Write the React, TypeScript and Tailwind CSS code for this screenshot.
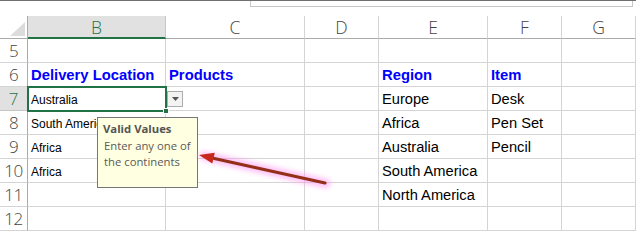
import React from "react";

const cellFont = { fontFamily: '"Liberation Sans", Arial, sans-serif' };
const headFont = { fontFamily: '"Open Sans", "Noto Sans", sans-serif' };

type Cell = { t?: string; k?: "h" | "s" | "n" };

const widths = ["w-[138px]", "w-[139px]", "w-[74px]", "w-[109px]", "w-[74px]", "flex-1"];
const letters = ["B", "C", "D", "E", "F", "G"];

const rows: { n: number; cells: Cell[] }[] = [
  { n: 5, cells: [{}, {}, {}, {}, {}, {}] },
  {
    n: 6,
    cells: [
      { t: "Delivery Location", k: "h" },
      { t: "Products", k: "h" },
      {},
      { t: "Region", k: "h" },
      { t: "Item", k: "h" },
      {},
    ],
  },
  { n: 7, cells: [{ t: "Australia", k: "s" }, {}, {}, { t: "Europe", k: "n" }, { t: "Desk", k: "n" }, {}] },
  { n: 8, cells: [{ t: "South America", k: "s" }, {}, {}, { t: "Africa", k: "n" }, { t: "Pen Set", k: "n" }, {}] },
  { n: 9, cells: [{ t: "Africa", k: "s" }, {}, {}, { t: "Australia", k: "n" }, { t: "Pencil", k: "n" }, {}] },
  { n: 10, cells: [{ t: "Africa", k: "s" }, {}, {}, { t: "South America", k: "n" }, {}, {}] },
  { n: 11, cells: [{}, {}, {}, { t: "North America", k: "n" }, {}, {}] },
  { n: 12, cells: [{}, {}, {}, {}, {}, {}] },
];

function CellText({ c }: { c: Cell }) {
  if (!c.t) return null;
  if (c.k === "h")
    return <span className="text-[14.8px] font-bold text-[#0000ff] whitespace-nowrap leading-none">{c.t}</span>;
  if (c.k === "s") return <span className="text-[12px] text-black whitespace-nowrap leading-none">{c.t}</span>;
  return <span className="text-[14.67px] text-black whitespace-nowrap leading-none">{c.t}</span>;
}

export default function App() {
  return (
    <div className="relative w-[636px] h-[232px] bg-white overflow-hidden select-none" style={cellFont}>
      {/* top strip */}
      <div className="flex h-[16px] border-t border-[#6f6f6f]">
        <div className="w-[250px]" />
        <div className="flex-1 h-[6px] border-l border-b border-r border-[#c6c6c6] mr-[3px]" />
      </div>

      {/* column header row */}
      <div className="flex h-[23px]">
        <div className="relative w-[28px] border-r border-b border-[#ababab] bg-white">
          <svg className="absolute left-0 top-0" width="28" height="23" viewBox="0 0 28 23">
            <polygon points="10,20 25,6 25,20" fill="#dcdcdc" />
          </svg>
        </div>
        {letters.map((l, i) =>
          l === "B" ? (
            <div
              key={l}
              className={`${widths[i]} flex items-center justify-center pt-[1px] bg-[#e1e1e1] border-r border-[#c6c6c6] border-b-2 border-b-[#217346] text-[#217346] text-[17.5px] font-light`}
              style={headFont}
            >
              {l}
            </div>
          ) : (
            <div
              key={l}
              className={`${widths[i]} flex items-center justify-center pt-[1px] bg-white border-r border-[#d4d4d4] border-b border-b-[#ababab] text-[#444444] text-[17.5px] font-light`}
              style={headFont}
            >
              {l}
            </div>
          )
        )}
      </div>

      {/* rows */}
      {rows.map((r) => (
        <div key={r.n} className="flex h-[24px]">
          {r.n === 7 ? (
            <div
              className="w-[28px] flex items-center justify-center bg-[#e1e1e1] border-r border-b border-r-[#ababab] border-b-[#c6c6c6] text-[#217346] text-[17px] font-light"
              style={headFont}
            >
              {r.n}
            </div>
          ) : (
            <div
              className="w-[28px] flex items-center justify-center bg-white border-r border-b border-r-[#ababab] border-b-[#d4d4d4] text-[#444444] text-[17px] font-light tracking-[-0.5px]"
              style={headFont}
            >
              {r.n}
            </div>
          )}
          {r.cells.map((c, i) => (
            <div
              key={i}
              className={`${widths[i]} flex items-center pl-[3px] pt-[2px] border-r border-b border-[#d4d4d4] overflow-visible`}
            >
              <CellText c={c} />
            </div>
          ))}
        </div>
      ))}

      {/* selection border on B7 */}
      <div className="absolute left-[27px] top-[86px] w-[140px] h-[26px] border-2 border-[#217346] pointer-events-none" />
      <div className="absolute left-[163px] top-[108px] w-[6px] h-[6px] bg-[#217346] border border-white" />

      {/* dropdown button */}
      <div className="absolute left-[167px] top-[91px] w-[16px] h-[16px] bg-[#f3f3f3] border border-[#acacac] flex items-center justify-center">
        <svg width="7" height="4" viewBox="0 0 7 4">
          <polygon points="0,0 7,0 3.5,4" fill="#555555" />
        </svg>
      </div>

      {/* input message tooltip */}
      <div
        className="absolute left-[97px] top-[117px] w-[101px] h-[71px] bg-[#ffffe1] border border-[#767676] pl-[5px] pt-[3px] text-[11.3px] leading-[16.5px] text-[#5a5a5a]"
        style={headFont}
      >
        <div className="font-bold text-[#555555]">Valid Values</div>
        <div className="pl-[1px]">Enter any one of</div>
        <div className="pl-[1px]">the continents</div>
      </div>

      {/* red arrow */}
      <svg className="absolute left-0 top-0 pointer-events-none" width="636" height="232" viewBox="0 0 636 232">
        <defs>
          <filter id="glow" x="-20%" y="-50%" width="140%" height="200%">
            <feGaussianBlur stdDeviation="2.5" />
          </filter>
        </defs>
        <g filter="url(#glow)" opacity="0.55">
          <line x1="326" y1="183.5" x2="204" y2="156" stroke="#ff8ff0" strokeWidth="9" strokeLinecap="round" />
        </g>
        <line x1="325" y1="183" x2="212" y2="158" stroke="#94301a" strokeWidth="3.2" strokeLinecap="round" />
        <polygon points="199,155 214.8,152.8 212.3,163.6" fill="#c8281c" />
      </svg>
    </div>
  );
}
